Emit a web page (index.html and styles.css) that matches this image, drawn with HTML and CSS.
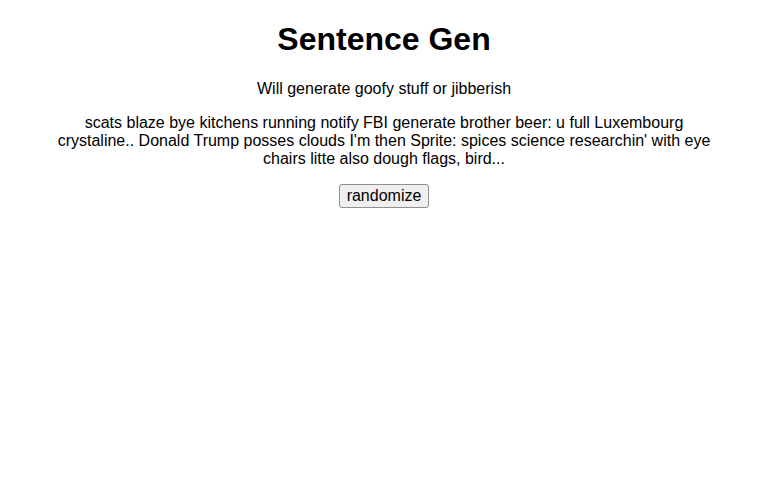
FILE: index.html
```html
<!DOCTYPE html>
<html lang="en">
<head>
    <meta charset="UTF-8">
    <meta name="viewport" content="width=device-width, initial-scale=1.0">
    <title>Sentence Gen</title>
    <link rel="stylesheet" href="styles.css">
</head>
<body>
    <div class="container">
        <h1>Sentence Gen</h1>
        <p>Will generate goofy stuff or jibberish</p>
        <p id="sentence">scats blaze bye kitchens running notify FBI generate brother beer: u full Luxembourg crystaline.. Donald Trump posses clouds I'm then Sprite: spices science researchin' with eye chairs litte also dough flags, bird...</p>
        <button type="button" id="randomize-btn">randomize</button>
    </div>
</body>
</html>
```

FILE: styles.css
```css
/* Global Styles */
body {
    font-family: 'Liberation Sans', Arial, sans-serif;
    color: #000000;
    background: #ffffff;
    margin: 0;
}

/* Centered column holding the generator */
.container {
    max-width: 666px;
    margin: 0 auto;
    text-align: center;
}

h1 {
    font-size: 32px;
}

p {
    font-size: 16px;
}

button {
    font-family: inherit;
    font-size: 16px;
    color: #000000;
    background-color: #efefef;
    border: 1px solid #8f8f8f;
    border-radius: 3px;
    padding: 2px 7px;
}
```
